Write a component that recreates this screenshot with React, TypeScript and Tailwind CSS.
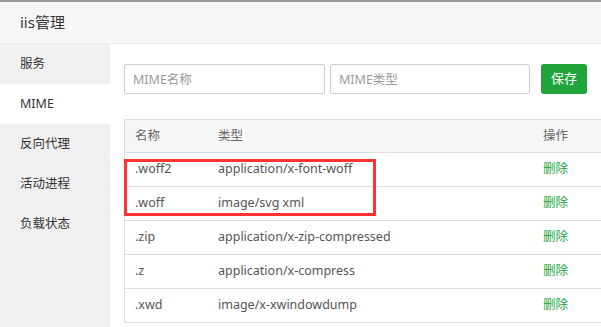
const rows = [
  { name: ".woff2", type: "application/x-font-woff" },
  { name: ".woff", type: "image/svg xml" },
  { name: ".zip", type: "application/x-zip-compressed" },
  { name: ".z", type: "application/x-compress" },
  { name: ".xwd", type: "image/x-xwindowdump" },
];

const menu = ["服务", "MIME", "反向代理", "活动进程", "负载状态"];

const App = () => {
  return (
    <div
      className="w-[601px] h-[327px] overflow-hidden flex flex-col border-t-2 border-[#999] bg-white text-[#555]"
      style={{ fontFamily: '"Noto Sans", "Noto Sans CJK SC", sans-serif' }}
    >
      <header className="h-[42px] shrink-0 flex items-center px-5 bg-[#f7f7f7] border-b border-[#ebebeb] text-[15px] text-[#333]">
        iis管理
      </header>
      <div className="flex flex-1 min-h-0">
        <aside className="w-[110px] shrink-0 bg-[#f0f0f0]">
          <ul>
            {menu.map((m) => (
              <li
                key={m}
                className={
                  "h-10 flex items-center px-5 text-[12.5px] text-[#333] " +
                  (m === "MIME" ? "bg-white" : "")
                }
              >
                {m}
              </li>
            ))}
          </ul>
        </aside>
        <main className="flex-1 min-w-0 overflow-hidden pl-[14px] pt-5">
          <div className="flex items-center">
            <input
              className="w-[201px] h-[30px] border border-[#ccc] rounded-[2px] px-2 text-[12.5px] outline-none placeholder:text-[#999]"
              placeholder="MIME名称"
            />
            <input
              className="w-[200px] h-[30px] ml-[5px] border border-[#ccc] rounded-[2px] px-2 text-[12.5px] outline-none placeholder:text-[#999]"
              placeholder="MIME类型"
            />
            <button className="ml-[11px] w-[46px] h-[30px] rounded-[3px] bg-[#20a53a] text-white text-[13px]">
              保存
            </button>
          </div>
          <div className="relative mt-[25px] w-[520px] border-l border-[#ddd] text-[12.5px]">
            <div className="flex h-[34px] items-center bg-[#f6f6f6] border-y border-[#ddd] text-[#666]">
              <div className="w-[83px] pl-[10px]">名称</div>
              <div className="w-[325px] pl-[10px]">类型</div>
              <div className="pl-[10px]">操作</div>
            </div>
            {rows.map((r) => (
              <div key={r.name} className="flex h-[34px] items-center border-b border-[#ddd]">
                <div className="w-[83px] pl-[10px]">{r.name}</div>
                <div className="w-[325px] pl-[10px]">{r.type}</div>
                <div className="pl-[10px] text-[#20a53a]">删除</div>
              </div>
            ))}
            <div className="absolute left-[-1px] top-[40px] w-[252px] h-[57px] border-[3px] border-[#f33] pointer-events-none" />
          </div>
        </main>
      </div>
    </div>
  );
};

export default App;
